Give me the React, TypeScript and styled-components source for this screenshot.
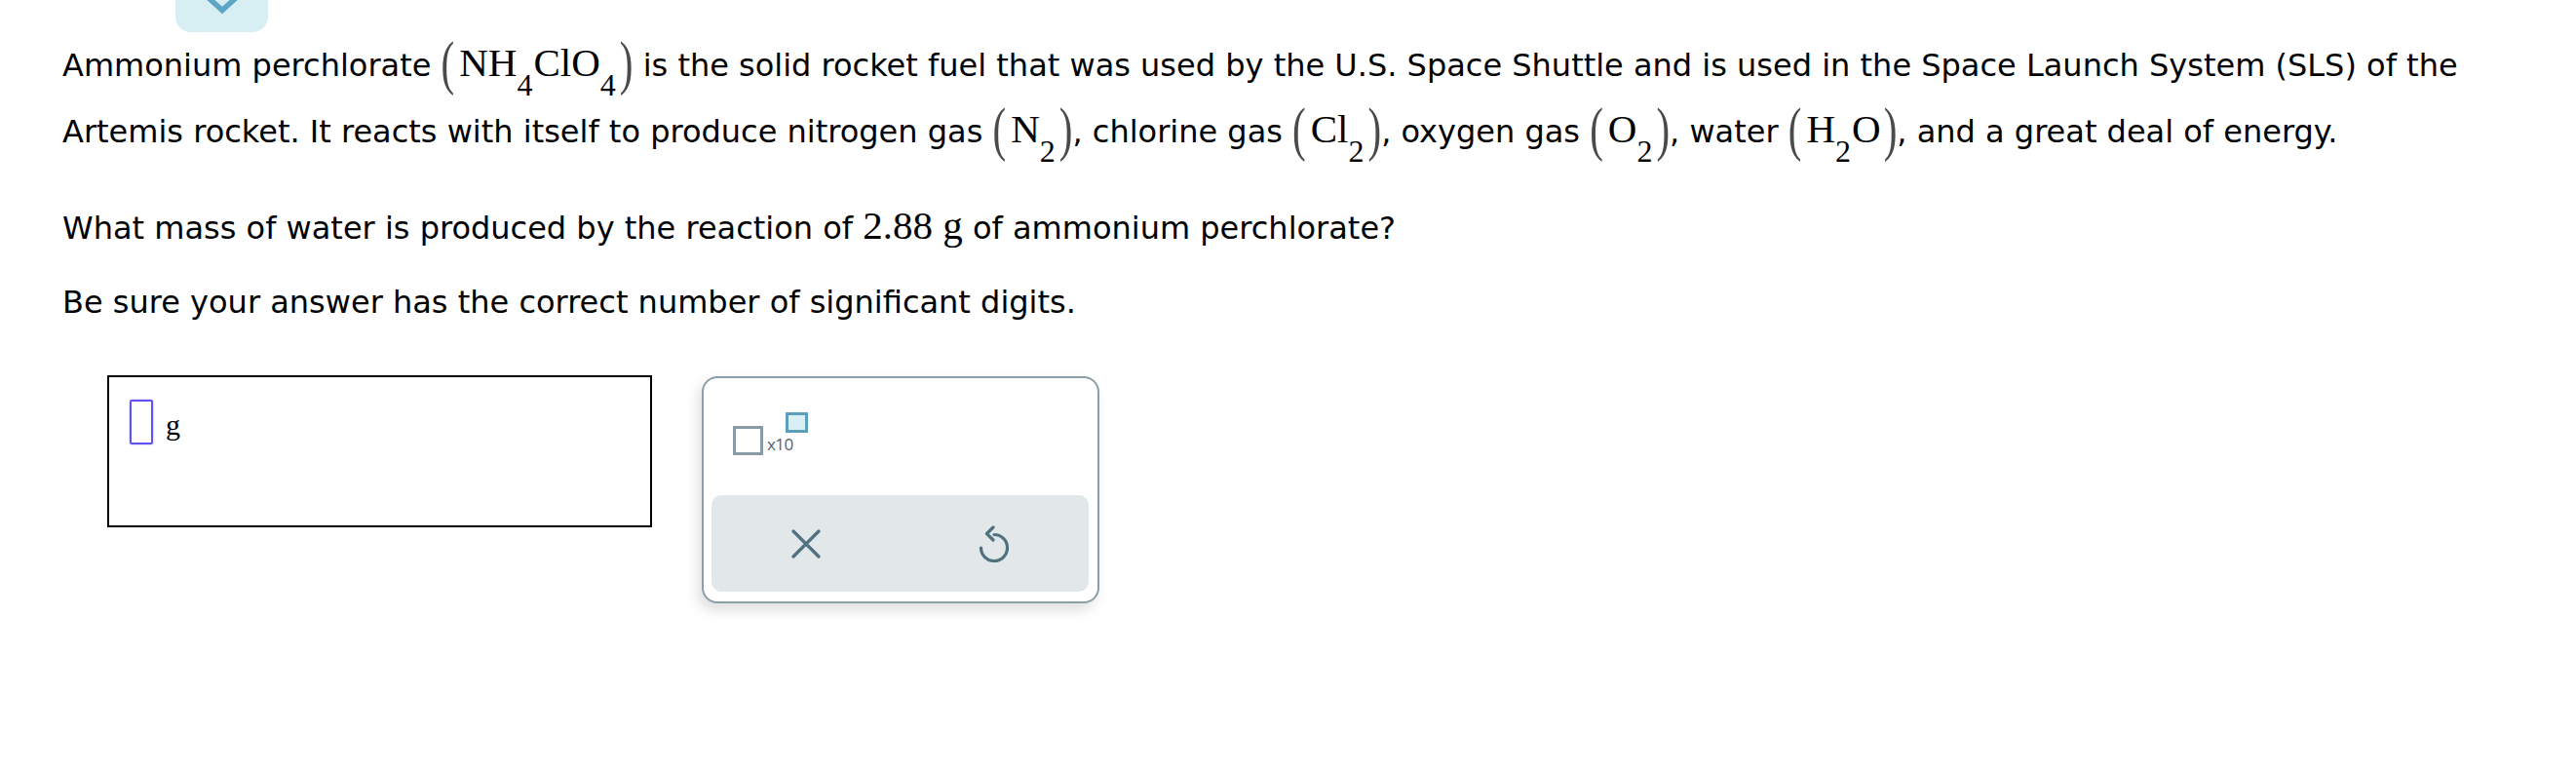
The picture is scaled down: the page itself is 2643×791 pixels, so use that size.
import React from "react";
import styled, { createGlobalStyle } from "styled-components";

const Global = createGlobalStyle`
  html, body { margin: 0; padding: 0; background: #ffffff; }
  body { font-family: "DejaVu Sans", Verdana, sans-serif; color: #000; }
`;

const Page = styled.div`
  width: 2643px;
  height: 791px;
  box-sizing: border-box;
  padding-left: 64px;
  overflow: hidden;
`;

const TabRow = styled.div`
  display: flex;
  padding-left: 116px;
`;

const Tab = styled.div`
  width: 95px;
  height: 33px;
  background: #d7eef3;
  border-radius: 0 0 16px 16px;
  display: flex;
  justify-content: center;
  align-items: flex-start;
  overflow: hidden;
`;

const Para = styled.p<{ $top: number }>`
  margin: ${(p) => p.$top}px 0 0 0;
  font-size: 32px;
  line-height: 68px;
  max-width: 2540px;
`;

const MathText = styled.span`
  font-family: "Liberation Serif", "Times New Roman", serif;
  font-size: 41px;
  line-height: 0;
  white-space: nowrap;
`;

const Sub = styled.span`
  font-size: 32px;
  line-height: 0;
  vertical-align: -20px;
  margin-right: 1px;
`;

const Paren = styled.span<{ $open?: boolean }>`
  display: inline-block;
  line-height: 40px;
  color: #4a4a4a;
  transform: scaleY(1.47);
  margin: ${(p) => (p.$open ? "0 5px 0 0" : "0 0 0 3px")};
`;

const AnswerRow = styled.div`
  display: flex;
  align-items: flex-start;
  gap: 51px;
  margin-top: 41px;
  padding-left: 46px;
`;

const AnswerBox = styled.div`
  width: 559px;
  height: 156px;
  box-sizing: border-box;
  border: 2px solid #000;
  padding: 23px 0 0 21px;
  display: flex;
  align-items: flex-start;
  gap: 13px;
`;

const InputSlot = styled.div`
  width: 24px;
  height: 46px;
  box-sizing: border-box;
  border: 2px solid #5f52f7;
  border-radius: 2px;
  box-shadow: 0 0 2px rgba(95, 82, 247, 0.6);
`;

const Unit = styled.span`
  font-family: "Liberation Serif", "Times New Roman", serif;
  font-size: 30px;
  line-height: 1;
  margin-top: 11px;
`;

const Panel = styled.div`
  margin-top: 1px;
  width: 408px;
  height: 233px;
  box-sizing: border-box;
  border: 2px solid #8c9ea8;
  border-radius: 16px;
  background: #fff;
  box-shadow: -4px 7px 14px rgba(0, 0, 0, 0.13);
  padding: 35px 9px 10px 8px;
  display: flex;
  flex-direction: column;
`;

const SciWidget = styled.div`
  display: flex;
  align-items: flex-start;
  height: 44px;
  margin-left: 22px;
`;

const BaseBox = styled.div`
  width: 31px;
  height: 30px;
  box-sizing: border-box;
  border: 3px solid #8a9aa3;
  margin-top: 14px;
`;

const TimesTen = styled.span`
  align-self: flex-end;
  font-family: "Open Sans", "DejaVu Sans", sans-serif;
  font-size: 17px;
  line-height: 17px;
  color: #4f626c;
  letter-spacing: -0.6px;
  margin: 0 0 3px 4px;
`;

const ExpBox = styled.div`
  width: 23px;
  height: 21px;
  box-sizing: border-box;
  border: 3px solid #5c9fba;
  background: #d8eff4;
  margin-left: -8px;
`;

const Toolbar = styled.div`
  margin-top: auto;
  height: 99px;
  border-radius: 10px;
  background: #e2e7ea;
  display: grid;
  grid-template-columns: 1fr 1fr;
  align-items: center;
  justify-items: center;
`;

const ToolButton = styled.button`
  border: none;
  background: transparent;
  padding: 0;
  width: 44px;
  height: 44px;
  display: flex;
  align-items: center;
  justify-content: center;
  cursor: pointer;
`;

const iconColor = "#517180";

export default function App() {
  return (
    <>
      <Global />
      <Page>
        <TabRow>
          <Tab>
            <svg width="40" height="20" viewBox="0 0 40 20">
              <polyline
                points="0.6,-7 20,10.5 39.4,-7"
                fill="none"
                stroke="#5ba6c4"
                strokeWidth="5.5"
                strokeLinejoin="miter"
              />
            </svg>
          </Tab>
        </TabRow>
        <Para $top={0}>
          Ammonium perchlorate{" "}
          <MathText>
            <Paren $open>(</Paren>NH<Sub>4</Sub>ClO<Sub>4</Sub>
            <Paren>)</Paren>
          </MathText>{" "}
          is the solid rocket fuel that was used by the U.S. Space Shuttle and is used in the Space
          Launch System (SLS) of the Artemis rocket. It reacts with itself to produce nitrogen gas{" "}
          <MathText>
            <Paren $open>(</Paren>N<Sub>2</Sub>
            <Paren>)</Paren>
          </MathText>
          , chlorine gas{" "}
          <MathText>
            <Paren $open>(</Paren>Cl<Sub>2</Sub>
            <Paren>)</Paren>
          </MathText>
          , oxygen gas{" "}
          <MathText>
            <Paren $open>(</Paren>O<Sub>2</Sub>
            <Paren>)</Paren>
          </MathText>
          , water{" "}
          <MathText>
            <Paren $open>(</Paren>H<Sub>2</Sub>O<Paren>)</Paren>
          </MathText>
          , and a great deal of energy.
        </Para>
        <Para $top={31}>
          What mass of water is produced by the reaction of <MathText>2.88 g</MathText> of ammonium
          perchlorate?
        </Para>
        <Para $top={8}>Be sure your answer has the correct number of significant digits.</Para>
        <AnswerRow>
          <AnswerBox>
            <InputSlot />
            <Unit>g</Unit>
          </AnswerBox>
          <Panel>
            <SciWidget>
              <BaseBox />
              <TimesTen>x10</TimesTen>
              <ExpBox />
            </SciWidget>
            <Toolbar>
              <ToolButton aria-label="Clear">
                <svg width="30" height="30" viewBox="0 0 30 30">
                  <path
                    d="M2 2 L28 28 M28 2 L2 28"
                    stroke={iconColor}
                    strokeWidth="3.2"
                    strokeLinecap="round"
                    fill="none"
                  />
                </svg>
              </ToolButton>
              <ToolButton aria-label="Undo">
                <svg width="34" height="40" viewBox="0 0 34 40">
                  <path
                    d="M17 10.5 A13.5 13.5 0 1 1 3.5 24"
                    stroke={iconColor}
                    strokeWidth="3.2"
                    strokeLinecap="round"
                    fill="none"
                  />
                  <path
                    d="M16 3 L9.5 9.5 L16 16"
                    stroke={iconColor}
                    strokeWidth="3.2"
                    strokeLinecap="round"
                    strokeLinejoin="round"
                    fill="none"
                  />
                </svg>
              </ToolButton>
            </Toolbar>
          </Panel>
        </AnswerRow>
      </Page>
    </>
  );
}
